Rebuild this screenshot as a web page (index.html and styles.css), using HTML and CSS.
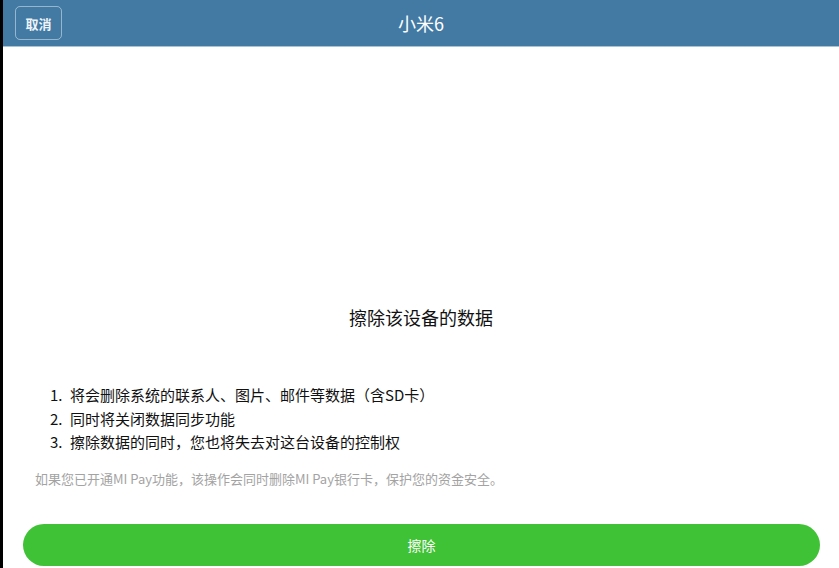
FILE: index.html
```html
<!DOCTYPE html>
<html lang="zh-CN">
<head>
  <meta charset="UTF-8">
  <title>小米6</title>
  <link rel="stylesheet" href="styles.css">
</head>
<body>
  <div class="app">
    <header class="header">
      <div class="header-left">
        <button class="btn-cancel" type="button">取消</button>
      </div>
      <h1 class="title">小米6</h1>
      <div class="header-right"></div>
    </header>

    <main class="content">
      <h2 class="heading">擦除该设备的数据</h2>
      <ol class="steps">
        <li>将会删除系统的联系人、图片、邮件等数据（含SD卡）</li>
        <li>同时将关闭数据同步功能</li>
        <li>擦除数据的同时，您也将失去对这台设备的控制权</li>
      </ol>
      <p class="note">如果您已开通MI Pay功能，该操作会同时删除MI Pay银行卡，保护您的资金安全。</p>
      <button class="btn-erase" type="button">擦除</button>
    </main>
  </div>
</body>
</html>
```

FILE: styles.css
```css
html, body {
  margin: 0;
  height: 100%;
}
body {
  font-family: "Noto Sans CJK SC", "Noto Sans", sans-serif;
  background-color: #fff;
  color: #222;
}
.app {
  min-height: 100%;
  border-left: 3px solid #000;
  display: flex;
  flex-direction: column;
}
.header {
  height: 46px;
  background-color: #437aa4;
  border-bottom: 1px solid #a8c2d6;
  display: grid;
  grid-template-columns: 1fr auto 1fr;
  align-items: center;
}
.header-left {
  padding-left: 12px;
}
.btn-cancel {
  width: 47px;
  height: 34px;
  padding: 0;
  background: transparent;
  border: 1px solid rgba(255, 255, 255, 0.45);
  border-radius: 5px;
  color: #eef3f8;
  font-family: inherit;
  font-size: 13px;
  font-weight: bold;
}
.title {
  margin: 0;
  color: #fff;
  font-size: 18px;
  font-weight: normal;
}
.content {
  display: flex;
  flex-direction: column;
}
.heading {
  margin: 258px 0 0;
  text-align: center;
  font-size: 18px;
  font-weight: normal;
  line-height: 24px;
  color: #111;
}
.steps {
  margin: 54px 0 0;
  padding-left: 47px;
  list-style: none;
  counter-reset: step;
  font-size: 15px;
  line-height: 23.5px;
  color: #111;
}
.steps li {
  counter-increment: step;
  display: flex;
}
.steps li::before {
  content: counter(step) ".";
  width: 20px;
  flex-shrink: 0;
}
.note {
  margin: 16px 0 0;
  padding-left: 32px;
  font-size: 13px;
  line-height: 18px;
  color: #a3a3a3;
}
.btn-erase {
  margin: 36px 19px 0 20px;
  height: 42px;
  border: none;
  border-radius: 21px;
  background-color: #3fc235;
  color: #fff;
  font-family: inherit;
  font-size: 14px;
}
```
